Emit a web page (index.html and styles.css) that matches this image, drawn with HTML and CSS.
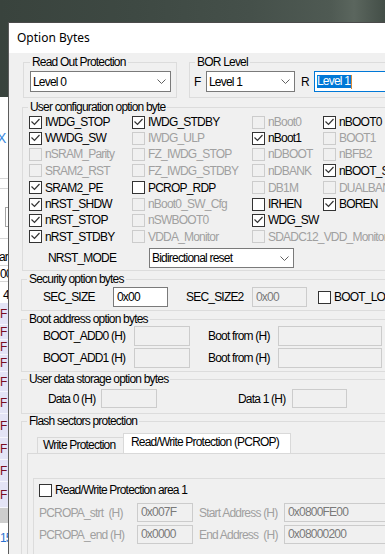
FILE: index.html
```html
<!DOCTYPE html>
<html lang="en">
<head>
<meta charset="utf-8">
<title>Option Bytes</title>
<link rel="stylesheet" href="styles.css">
</head>
<body>
<div class="screen">
  <div class="bgapp">
    <div class="desk-gap"></div>
    <div class="app">
      <div class="sp sp34"></div>
      <div class="app-x">X</div>
      <div class="sp sp33"></div>
      <div class="hl"></div>
      <div class="sp sp9"></div>
      <div class="hl"></div>
      <div class="sp sp18"></div>
      <div class="app-box"></div>
      <div class="sp sp11"></div>
      <div class="hl"></div>
      <div class="app-t app-ar">ar</div>
      <div class="hl"></div>
      <div class="app-t app-00">00</div>
      <div class="hl"></div>
      <div class="app-t app-4">4</div>
      <div class="app-rows">
        <div class="fr h22">F</div>
        <div class="fr h15">F</div>
        <div class="fr h15">F</div>
        <div class="fr h17">F</div>
        <div class="fr h20">F</div>
        <div class="fr h22">F</div>
        <div class="fr h24">F</div>
        <div class="fr h22">F</div>
        <div class="fr h22">F</div>
        <div class="fr h26">F</div>
      </div>
      <div class="app-grey"></div>
      <div class="app-t app-15">15</div>
    </div>
  </div>

  <div class="dialog">
    <div class="titlebar">Option Bytes</div>
    <div class="content">
      <div class="toprow">
        <fieldset class="grp grp-rop">
          <legend>Read Out Protection</legend>
          <div class="rop-body">
            <div class="combo combo-rop"><span>Level 0</span><svg class="chev" width="9" height="5" viewBox="0 0 9 5"><path d="M0.5 0.5 L4.5 4.5 L8.5 0.5" fill="none" stroke="#606060" stroke-width="1"/></svg></div>
          </div>
        </fieldset>
        <fieldset class="grp grp-bor">
          <legend>BOR Level</legend>
          <div class="bor-body">
            <span class="bor-lbl">F</span>
            <div class="combo combo-bor"><span>Level 1</span><svg class="chev" width="9" height="5" viewBox="0 0 9 5"><path d="M0.5 0.5 L4.5 4.5 L8.5 0.5" fill="none" stroke="#606060" stroke-width="1"/></svg></div>
            <span class="bor-lbl bor-r">R</span>
            <div class="combo combo-bor focused"><span class="sel">Level 1</span><span class="caret"></span></div>
          </div>
        </fieldset>
      </div>

      <fieldset class="grp grp-user">
        <legend>User configuration option byte</legend>
        <div class="user-body">
          <div class="cbgrid">
            <div class="cb"><span class="box"><svg width="11" height="11" viewBox="0 0 11 11"><path d="M1.5 4.5 L4.5 7.5 L9.5 2" fill="none" stroke="#333" stroke-width="1.2"/></svg></span><span class="cb-t">IWDG_STOP</span></div>
            <div class="cb"><span class="box"><svg width="11" height="11" viewBox="0 0 11 11"><path d="M1.5 4.5 L4.5 7.5 L9.5 2" fill="none" stroke="#333" stroke-width="1.2"/></svg></span><span class="cb-t">IWDG_STDBY</span></div>
            <div class="cb"><span class="box dis"></span><span class="cb-t dis-t">nBoot0</span></div>
            <div class="cb"><span class="box"><svg width="11" height="11" viewBox="0 0 11 11"><path d="M1.5 4.5 L4.5 7.5 L9.5 2" fill="none" stroke="#333" stroke-width="1.2"/></svg></span><span class="cb-t">nBOOT0</span></div>

            <div class="cb"><span class="box"><svg width="11" height="11" viewBox="0 0 11 11"><path d="M1.5 4.5 L4.5 7.5 L9.5 2" fill="none" stroke="#333" stroke-width="1.2"/></svg></span><span class="cb-t">WWDG_SW</span></div>
            <div class="cb"><span class="box dis"></span><span class="cb-t dis-t">IWDG_ULP</span></div>
            <div class="cb"><span class="box"><svg width="11" height="11" viewBox="0 0 11 11"><path d="M1.5 4.5 L4.5 7.5 L9.5 2" fill="none" stroke="#333" stroke-width="1.2"/></svg></span><span class="cb-t">nBoot1</span></div>
            <div class="cb"><span class="box dis"></span><span class="cb-t dis-t">BOOT1</span></div>

            <div class="cb"><span class="box dis"></span><span class="cb-t dis-t">nSRAM_Parity</span></div>
            <div class="cb"><span class="box dis"></span><span class="cb-t dis-t">FZ_IWDG_STOP</span></div>
            <div class="cb"><span class="box dis"></span><span class="cb-t dis-t">nDBOOT</span></div>
            <div class="cb"><span class="box dis"></span><span class="cb-t dis-t">nBFB2</span></div>

            <div class="cb"><span class="box dis"></span><span class="cb-t dis-t">SRAM2_RST</span></div>
            <div class="cb"><span class="box dis"></span><span class="cb-t dis-t">FZ_IWDG_STDBY</span></div>
            <div class="cb"><span class="box dis"></span><span class="cb-t dis-t">nDBANK</span></div>
            <div class="cb"><span class="box"><svg width="11" height="11" viewBox="0 0 11 11"><path d="M1.5 4.5 L4.5 7.5 L9.5 2" fill="none" stroke="#333" stroke-width="1.2"/></svg></span><span class="cb-t">nBOOT_SEL</span></div>

            <div class="cb"><span class="box"><svg width="11" height="11" viewBox="0 0 11 11"><path d="M1.5 4.5 L4.5 7.5 L9.5 2" fill="none" stroke="#333" stroke-width="1.2"/></svg></span><span class="cb-t">SRAM2_PE</span></div>
            <div class="cb"><span class="box"></span><span class="cb-t">PCROP_RDP</span></div>
            <div class="cb"><span class="box dis"></span><span class="cb-t dis-t">DB1M</span></div>
            <div class="cb"><span class="box dis"></span><span class="cb-t dis-t">DUALBANK</span></div>

            <div class="cb"><span class="box"><svg width="11" height="11" viewBox="0 0 11 11"><path d="M1.5 4.5 L4.5 7.5 L9.5 2" fill="none" stroke="#333" stroke-width="1.2"/></svg></span><span class="cb-t">nRST_SHDW</span></div>
            <div class="cb"><span class="box dis"></span><span class="cb-t dis-t">nBoot0_SW_Cfg</span></div>
            <div class="cb"><span class="box"></span><span class="cb-t">IRHEN</span></div>
            <div class="cb"><span class="box"><svg width="11" height="11" viewBox="0 0 11 11"><path d="M1.5 4.5 L4.5 7.5 L9.5 2" fill="none" stroke="#333" stroke-width="1.2"/></svg></span><span class="cb-t">BOREN</span></div>

            <div class="cb"><span class="box"><svg width="11" height="11" viewBox="0 0 11 11"><path d="M1.5 4.5 L4.5 7.5 L9.5 2" fill="none" stroke="#333" stroke-width="1.2"/></svg></span><span class="cb-t">nRST_STOP</span></div>
            <div class="cb"><span class="box dis"></span><span class="cb-t dis-t">nSWBOOT0</span></div>
            <div class="cb"><span class="box"><svg width="11" height="11" viewBox="0 0 11 11"><path d="M1.5 4.5 L4.5 7.5 L9.5 2" fill="none" stroke="#333" stroke-width="1.2"/></svg></span><span class="cb-t">WDG_SW</span></div>
            <div class="cb"></div>

            <div class="cb"><span class="box"><svg width="11" height="11" viewBox="0 0 11 11"><path d="M1.5 4.5 L4.5 7.5 L9.5 2" fill="none" stroke="#333" stroke-width="1.2"/></svg></span><span class="cb-t">nRST_STDBY</span></div>
            <div class="cb"><span class="box dis"></span><span class="cb-t dis-t">VDDA_Monitor</span></div>
            <div class="cb"><span class="box dis"></span><span class="cb-t dis-t">SDADC12_VDD_Monitor</span></div>
            <div class="cb"></div>
          </div>
          <div class="nrst">
            <span class="nrst-lbl">NRST_MODE</span>
            <div class="combo combo-nrst"><span>Bidirectional reset</span><svg class="chev" width="9" height="5" viewBox="0 0 9 5"><path d="M0.5 0.5 L4.5 4.5 L8.5 0.5" fill="none" stroke="#606060" stroke-width="1"/></svg></div>
          </div>
        </div>
      </fieldset>

      <fieldset class="grp grp-sec">
        <legend>Security option bytes</legend>
        <div class="sec-body">
          <span class="lbl sec-l1">SEC_SIZE</span>
          <div class="inp w55">0x00</div>
          <span class="lbl sec-l2">SEC_SIZE2</span>
          <div class="inp dis w55">0x00</div>
          <span class="box sec-cb"></span><span class="cb-t">BOOT_LOCK</span>
        </div>
      </fieldset>

      <fieldset class="grp grp-boot">
        <legend>Boot address option bytes</legend>
        <div class="boot-body">
          <div class="frow">
            <span class="lbl boot-l1">BOOT_ADD0 (H)</span>
            <div class="inp dis w56"></div>
            <span class="lbl boot-l2">Boot from (H)</span>
            <div class="inp dis w104"></div>
          </div>
          <div class="frow">
            <span class="lbl boot-l1">BOOT_ADD1 (H)</span>
            <div class="inp dis w56"></div>
            <span class="lbl boot-l2">Boot from (H)</span>
            <div class="inp dis w104"></div>
          </div>
        </div>
      </fieldset>

      <fieldset class="grp grp-data">
        <legend>User data storage option bytes</legend>
        <div class="data-body">
          <span class="lbl data-l1">Data 0 (H)</span>
          <div class="inp dis w56"></div>
          <span class="lbl data-l2">Data 1 (H)</span>
          <div class="inp dis w55"></div>
        </div>
      </fieldset>

      <fieldset class="grp grp-flash">
        <legend>Flash sectors protection</legend>
        <div class="flash-body">
          <div class="tabs">
            <div class="tab tab-in">Write Protection</div>
            <div class="tab tab-act">Read/Write Protection (PCROP)</div>
          </div>
          <div class="panel">
            <div class="ibox">
              <div class="ib-check"><span class="box"></span><span class="cb-t">Read/Write Protection area 1</span></div>
              <div class="ib-rows">
                <div class="frow">
                  <span class="lbl dis-t pc-l1">PCROPA_strt  (H)</span>
                  <div class="inp dis w56">0x007F</div>
                  <span class="lbl dis-t pc-l2">Start Address (H)</span>
                  <div class="inp dis w110">0x0800FE00</div>
                </div>
                <div class="frow">
                  <span class="lbl dis-t pc-l1">PCROPA_end (H)</span>
                  <div class="inp dis w56">0x0000</div>
                  <span class="lbl dis-t pc-l2">End Address  (H)</span>
                  <div class="inp dis w110">0x08000200</div>
                </div>
              </div>
            </div>
          </div>
        </div>
      </fieldset>
    </div>
  </div>
</div>
</body>
</html>
```

FILE: styles.css
```css
* { box-sizing: border-box; }
html, body { margin: 0; padding: 0; }
body {
  width: 385px;
  height: 554px;
  overflow: hidden;
  background: linear-gradient(90deg, #39433d 0%, #3e4943 35%, #45504a 65%, #4f5a53 86%, #5b665e 92%, #434e47 100%);
  font-family: "Liberation Sans", Arial, sans-serif;
  font-size: 12px;
  letter-spacing: -0.8px;
  line-height: 16px;
  color: #000;
}
.screen { display: flex; align-items: flex-start; width: 385px; height: 554px; overflow: hidden; }

/* background application strip */
.bgapp { flex: none; width: 8px; height: 554px; display: flex; flex-direction: column; overflow: hidden; }
.desk-gap { flex: none; height: 97px; }
.app { flex: 1; background: #fff; display: flex; flex-direction: column; overflow: hidden; }
.sp { flex: none; }
.sp34 { height: 34px; }
.sp33 { height: 33px; }
.sp9 { height: 9px; }
.sp18 { height: 18px; }
.sp11 { height: 11px; }
.hl { flex: none; height: 1px; background: #d6d6d6; }
.app-x { flex: none; height: 14px; line-height: 14px; font-size: 14px; color: #3b8ae0; margin-left: -3px; }
.app-box { flex: none; height: 20px; margin-left: 5px; border: 1px solid #a5a5a5; border-right: none; }
.app-t { flex: none; line-height: 12px; white-space: nowrap; }
.app-ar { height: 26px; padding-top: 12px; margin-left: -1px; }
.app-00 { height: 15px; padding-top: 2px; }
.app-4 { height: 21px; padding-top: 7px; padding-left: 3px; }
.app-rows { flex: none; display: flex; flex-direction: column; background: #e4e4f6; }
.fr { flex: none; display: flex; align-items: center; color: #7a0c20; border-bottom: 1px solid #f6f6fd; white-space: nowrap; }
.h15 { height: 15px; }
.h17 { height: 17px; }
.h20 { height: 20px; }
.h22 { height: 22px; }
.h24 { height: 24px; }
.h26 { height: 26px; }
.app-grey { flex: none; height: 15px; background: #cdcdcd; }
.app-15 { height: 24px; padding-top: 9px; color: #2a72d0; }

/* dialog */
.dialog {
  flex: none;
  width: 430px;
  height: 532px;
  margin-top: 22px;
  border-top: 1px solid #4a4a4a;
  border-left: 1px solid #5c5c5c;
  background: #f0f0f0;
  overflow: hidden;
}
.titlebar {
  height: 30px;
  background: #fff;
  padding-left: 8px;
  font-family: "Noto Sans", "Open Sans", sans-serif;
  font-size: 12px;
  letter-spacing: 0;
  line-height: 30px;
  color: #000;
}
.content { padding-left: 12px; }

/* group boxes */
.grp { margin: 0; padding: 0; border: 1px solid #dcdcdc; min-width: 0; }
.grp > legend { margin-left: 5px; padding: 0 2px; height: 12px; line-height: 12px; white-space: nowrap; }

.toprow { display: flex; margin-top: 3px; }
.grp-rop { flex: none; margin-left: 2px; }
.grp-rop > legend { margin-left: 6px; }
.rop-body { padding: 3px 5px 5px 6px; }
.grp-bor { flex: 1; margin-left: 12px; }
.bor-body { display: flex; align-items: center; padding: 3px 0 5px 4px; }
.bor-lbl { flex: none; width: 12px; }
.bor-r { width: 13px; margin-left: 6px; }

/* combos */
.combo {
  flex: none;
  display: flex;
  align-items: center;
  justify-content: space-between;
  height: 21px;
  border: 1px solid #7a7a7a;
  background: #fff;
  padding: 0 4px 0 2px;
  white-space: nowrap;
}
.combo-rop { width: 141px; }
.combo-bor { width: 89px; }
.combo-nrst { width: 145px; height: 20px; }
.chev { flex: none; display: block; }
.combo.focused { border-color: #0078d7; justify-content: flex-start; }
.sel { background: #0078d7; color: #fff; height: 13px; line-height: 13px; padding-right: 1px; }
.caret { flex: none; width: 1px; height: 14px; background: #d38a3a; }

/* user configuration */
.grp-user { margin: 3px 0 0 1px; }
.user-body { padding: 1px 0 2px 6px; }
.cbgrid {
  display: grid;
  grid-template-columns: 103px 120px 71px 110px;
  grid-template-rows: 16px 16px 16px 17px 17px 16px 16px 17px;
}
.cb { display: flex; align-items: center; white-space: nowrap; min-width: 0; }
.box {
  flex: none;
  width: 13px;
  height: 13px;
  border: 1px solid #333;
  background: #fff;
  display: flex;
  align-items: center;
  justify-content: center;
}
.box svg { display: block; }
.box.dis { border-color: #cccccc; background: #f0f0f0; }
.cb-t { margin-left: 3px; white-space: nowrap; }
.dis-t { color: #a0a0a0; }
.nrst { display: flex; align-items: center; margin-top: 3px; }
.nrst-lbl { flex: none; margin-left: 19px; width: 101px; }

/* fields */
.lbl { flex: none; white-space: pre; }
.inp {
  flex: none;
  height: 20px;
  border: 1px solid #7a7a7a;
  background: #fff;
  padding: 0 3px;
  line-height: 18px;
  white-space: nowrap;
  overflow: hidden;
}
.inp.dis { border-color: #cccccc; background: #f0f0f0; color: #7a7a7a; }
.w55 { width: 55px; }
.w56 { width: 56px; }
.w104 { width: 104px; }
.w110 { width: 110px; }
.frow { display: flex; align-items: center; }

.grp-sec { margin-top: 2px; }
.sec-body { display: flex; align-items: center; padding: 2px 0 3px 0; }
.sec-l1 { margin-left: 21px; width: 70px; }
.sec-l2 { margin-left: 18px; width: 66px; }
.sec-cb { margin-left: 11px; }

.grp-boot { margin-top: 2px; }
.boot-body { display: flex; flex-direction: column; gap: 2px; padding: 1px 0 3px 0; }
.boot-l1 { margin-left: 21px; width: 91px; }
.boot-l2 { margin-left: 18px; width: 70px; }

.grp-data { margin-top: 1px; }
.data-body { display: flex; align-items: center; padding: 4px 0 5px 0; }
.data-body .inp { height: 19px; line-height: 17px; }
.data-l1 { margin-left: 26px; width: 53px; }
.data-l2 { margin-left: 81px; width: 54px; }

/* flash sectors protection */
.grp-flash { margin-top: 1px; }
.flash-body { padding: 6px 0 0 5px; }
.tabs { display: flex; align-items: flex-end; height: 20px; padding-left: 10px; }
.tab { flex: none; border: 1px solid #d9d9d9; border-bottom: none; white-space: nowrap; }
.tab-in { width: 86px; height: 16px; line-height: 15px; padding-left: 5px; border-right: none; background: #f0f0f0; }
.tab-act { width: 168px; height: 20px; line-height: 17px; padding-left: 7px; background: #fff; }
.panel { height: 120px; border: 1px solid #d9d9d9; background: #f0f0f0; padding: 24px 0 0 5px; }
.ibox { height: 100px; border: 1px solid #dcdcdc; padding: 3px 0 0 5px; }
.ib-check { display: flex; align-items: center; height: 16px; }
.ib-rows { display: flex; flex-direction: column; gap: 3px; margin-top: 5px; }
.ib-rows .inp { height: 19px; line-height: 17px; }
.pc-l1 { width: 98px; }
.pc-l2 { margin-left: 6px; width: 85px; }
```
